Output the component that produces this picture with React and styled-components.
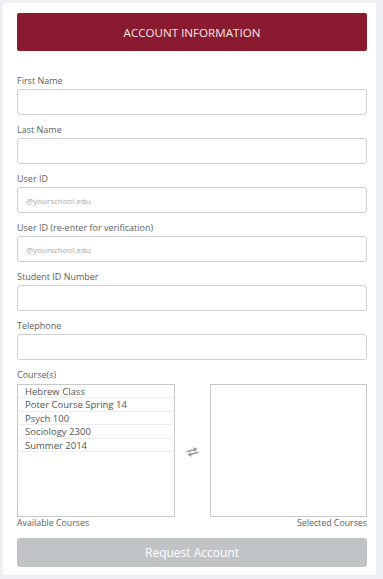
import React from "react";
import styled, { createGlobalStyle } from "styled-components";

const Global = createGlobalStyle`
  html, body { margin: 0; padding: 0; background: #eef0f4; }
  body { font-family: "Open Sans", "Liberation Sans", sans-serif; }
  * { box-sizing: border-box; }
`;

const Page = styled.div`
  padding: 3px 7px 4px 3px;
  height: 579px;
`;

const Card = styled.div`
  background: #fff;
  height: 572px;
  padding: 10px 9px 8px 14px;
  display: flex;
  flex-direction: column;
`;

const Header = styled.div`
  height: 38px;
  background: #8a1a2f;
  border-radius: 2px;
  color: #f6e6ea;
  font-size: 11.6px;
  display: flex;
  align-items: center;
  justify-content: center;
  margin-bottom: 23px;
`;

const Fields = styled.div`
  display: flex;
  flex-direction: column;
  gap: 8px;
`;

const Field = styled.div`
  display: flex;
  flex-direction: column;
`;

const Label = styled.label`
  font-size: 9px;
  line-height: 13px;
  color: #606060;
  margin-bottom: 2px;
`;

const Input = styled.input`
  height: 26px;
  border: 1px solid #cfcfcf;
  border-radius: 3px;
  padding: 0 8px;
  font-family: inherit;
  font-size: 8px;
  color: #555;
  outline: none;
  &::placeholder { color: #aaa; }
`;

const CourseLabel = styled(Label)`
  margin-top: 8px;
  margin-bottom: 3px;
`;

const Picker = styled.div`
  display: grid;
  grid-template-columns: 158px 1fr 157px;
  height: 133px;
`;

const ListBox = styled.div`
  border: 1px solid #c8c8c8;
  display: flex;
  flex-direction: column;
  padding: 0 1px;
  overflow: hidden;
`;

const Item = styled.div`
  font-size: 9.5px;
  line-height: 13.3px;
  color: #555;
  padding-left: 6px;
  border-bottom: 1px solid #ececec;
  height: 13.4px;
`;

const Swap = styled.div`
  display: flex;
  align-items: center;
  justify-content: center;
  padding-top: 2px;
`;

const Captions = styled.div`
  display: flex;
  justify-content: space-between;
  font-size: 8.8px;
  line-height: 12px;
  color: #606060;
`;

const Button = styled.button`
  margin-top: 9px;
  height: 29px;
  border: none;
  border-radius: 3px;
  background: #c1c4c7;
  color: #fff;
  font-family: inherit;
  font-size: 12px;
`;

const fields = [
  { label: "First Name" },
  { label: "Last Name" },
  { label: "User ID", ph: "@yourschool.edu" },
  { label: "User ID (re-enter for verification)", ph: "@yourschool.edu" },
  { label: "Student ID Number" },
  { label: "Telephone" },
];

const courses = [
  "Hebrew Class",
  "Poter Course Spring 14",
  "Psych 100",
  "Sociology 2300",
  "Summer 2014",
];

export default function App() {
  return (
    <>
      <Global />
      <Page>
        <Card>
          <Header>ACCOUNT INFORMATION</Header>
          <Fields>
            {fields.map((f) => (
              <Field key={f.label}>
                <Label>{f.label}</Label>
                <Input placeholder={f.ph || ""} />
              </Field>
            ))}
          </Fields>
          <CourseLabel>Course(s)</CourseLabel>
          <Picker>
            <ListBox>
              {courses.map((c) => (
                <Item key={c}>{c}</Item>
              ))}
            </ListBox>
            <Swap>
              <svg width="13" height="10" viewBox="0 0 13 10">
                <g transform="rotate(-15 6.5 5)" fill="#999">
                  <path d="M1 2.4 H8.5 V0.6 L12 3.2 L8.5 5.6 V4 H1 Z" />
                  <path d="M12 6 H4.5 V4.4 L1 6.8 L4.5 9.4 V7.6 H12 Z" />
                </g>
              </svg>
            </Swap>
            <ListBox />
          </Picker>
          <Captions>
            <span>Available Courses</span>
            <span>Selected Courses</span>
          </Captions>
          <Button>Request Account</Button>
        </Card>
      </Page>
    </>
  );
}
